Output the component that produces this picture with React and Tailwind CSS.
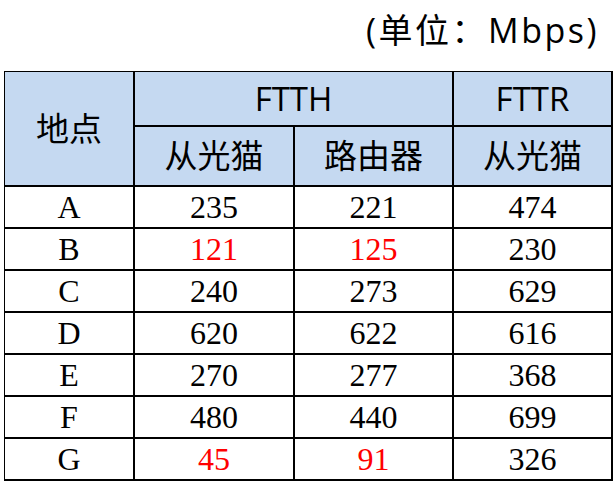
import React from "react";

const rows = [
  { name: "A", a: "235", b: "221", c: "474" },
  { name: "B", a: "121", b: "125", c: "230", redA: true, redB: true },
  { name: "C", a: "240", b: "273", c: "629" },
  { name: "D", a: "620", b: "622", c: "616" },
  { name: "E", a: "270", b: "277", c: "368" },
  { name: "F", a: "480", b: "440", c: "699" },
  { name: "G", a: "45", b: "91", c: "326", redA: true, redB: true },
];

const sans = "font-['Open_Sans','Noto_Sans_CJK_SC',sans-serif]";
const serif = "font-['Liberation_Serif','Noto_Sans_CJK_SC',serif]";

const headCell = `bg-[#c5d9f1] flex items-center justify-center text-black text-[33px] ${sans}`;
const dataCell = `bg-white flex items-center justify-center text-[32px] leading-none ${serif}`;

export default function App() {
  return (
    <div className="w-[615px] h-[483px] bg-white overflow-hidden">
      <div className={`h-[71px] flex items-start justify-end pr-[16px] pt-[5px] text-[34px] tracking-[2.5px] text-black ${sans}`}>
        (单位：Mbps)
      </div>
      <div className="ml-[4px] w-[609px] bg-black pl-px pt-px pr-[2px] pb-[2px] grid grid-cols-[128px_158px_157px_157px] grid-rows-[53px_58px_repeat(7,40px)] gap-[2px]">
        <div className={`${headCell} row-span-2`}>地点</div>
        <div className={`${headCell} col-span-2`}>FTTH</div>
        <div className={headCell}>FTTR</div>
        <div className={headCell}>从光猫</div>
        <div className={headCell}>路由器</div>
        <div className={headCell}>从光猫</div>
        {rows.map((r) => (
          <React.Fragment key={r.name}>
            <div className={`${dataCell} text-black`}>{r.name}</div>
            <div className={`${dataCell} ${r.redA ? "text-[#ff0000]" : "text-black"}`}>{r.a}</div>
            <div className={`${dataCell} ${r.redB ? "text-[#ff0000]" : "text-black"}`}>{r.b}</div>
            <div className={`${dataCell} text-black`}>{r.c}</div>
          </React.Fragment>
        ))}
      </div>
    </div>
  );
}
